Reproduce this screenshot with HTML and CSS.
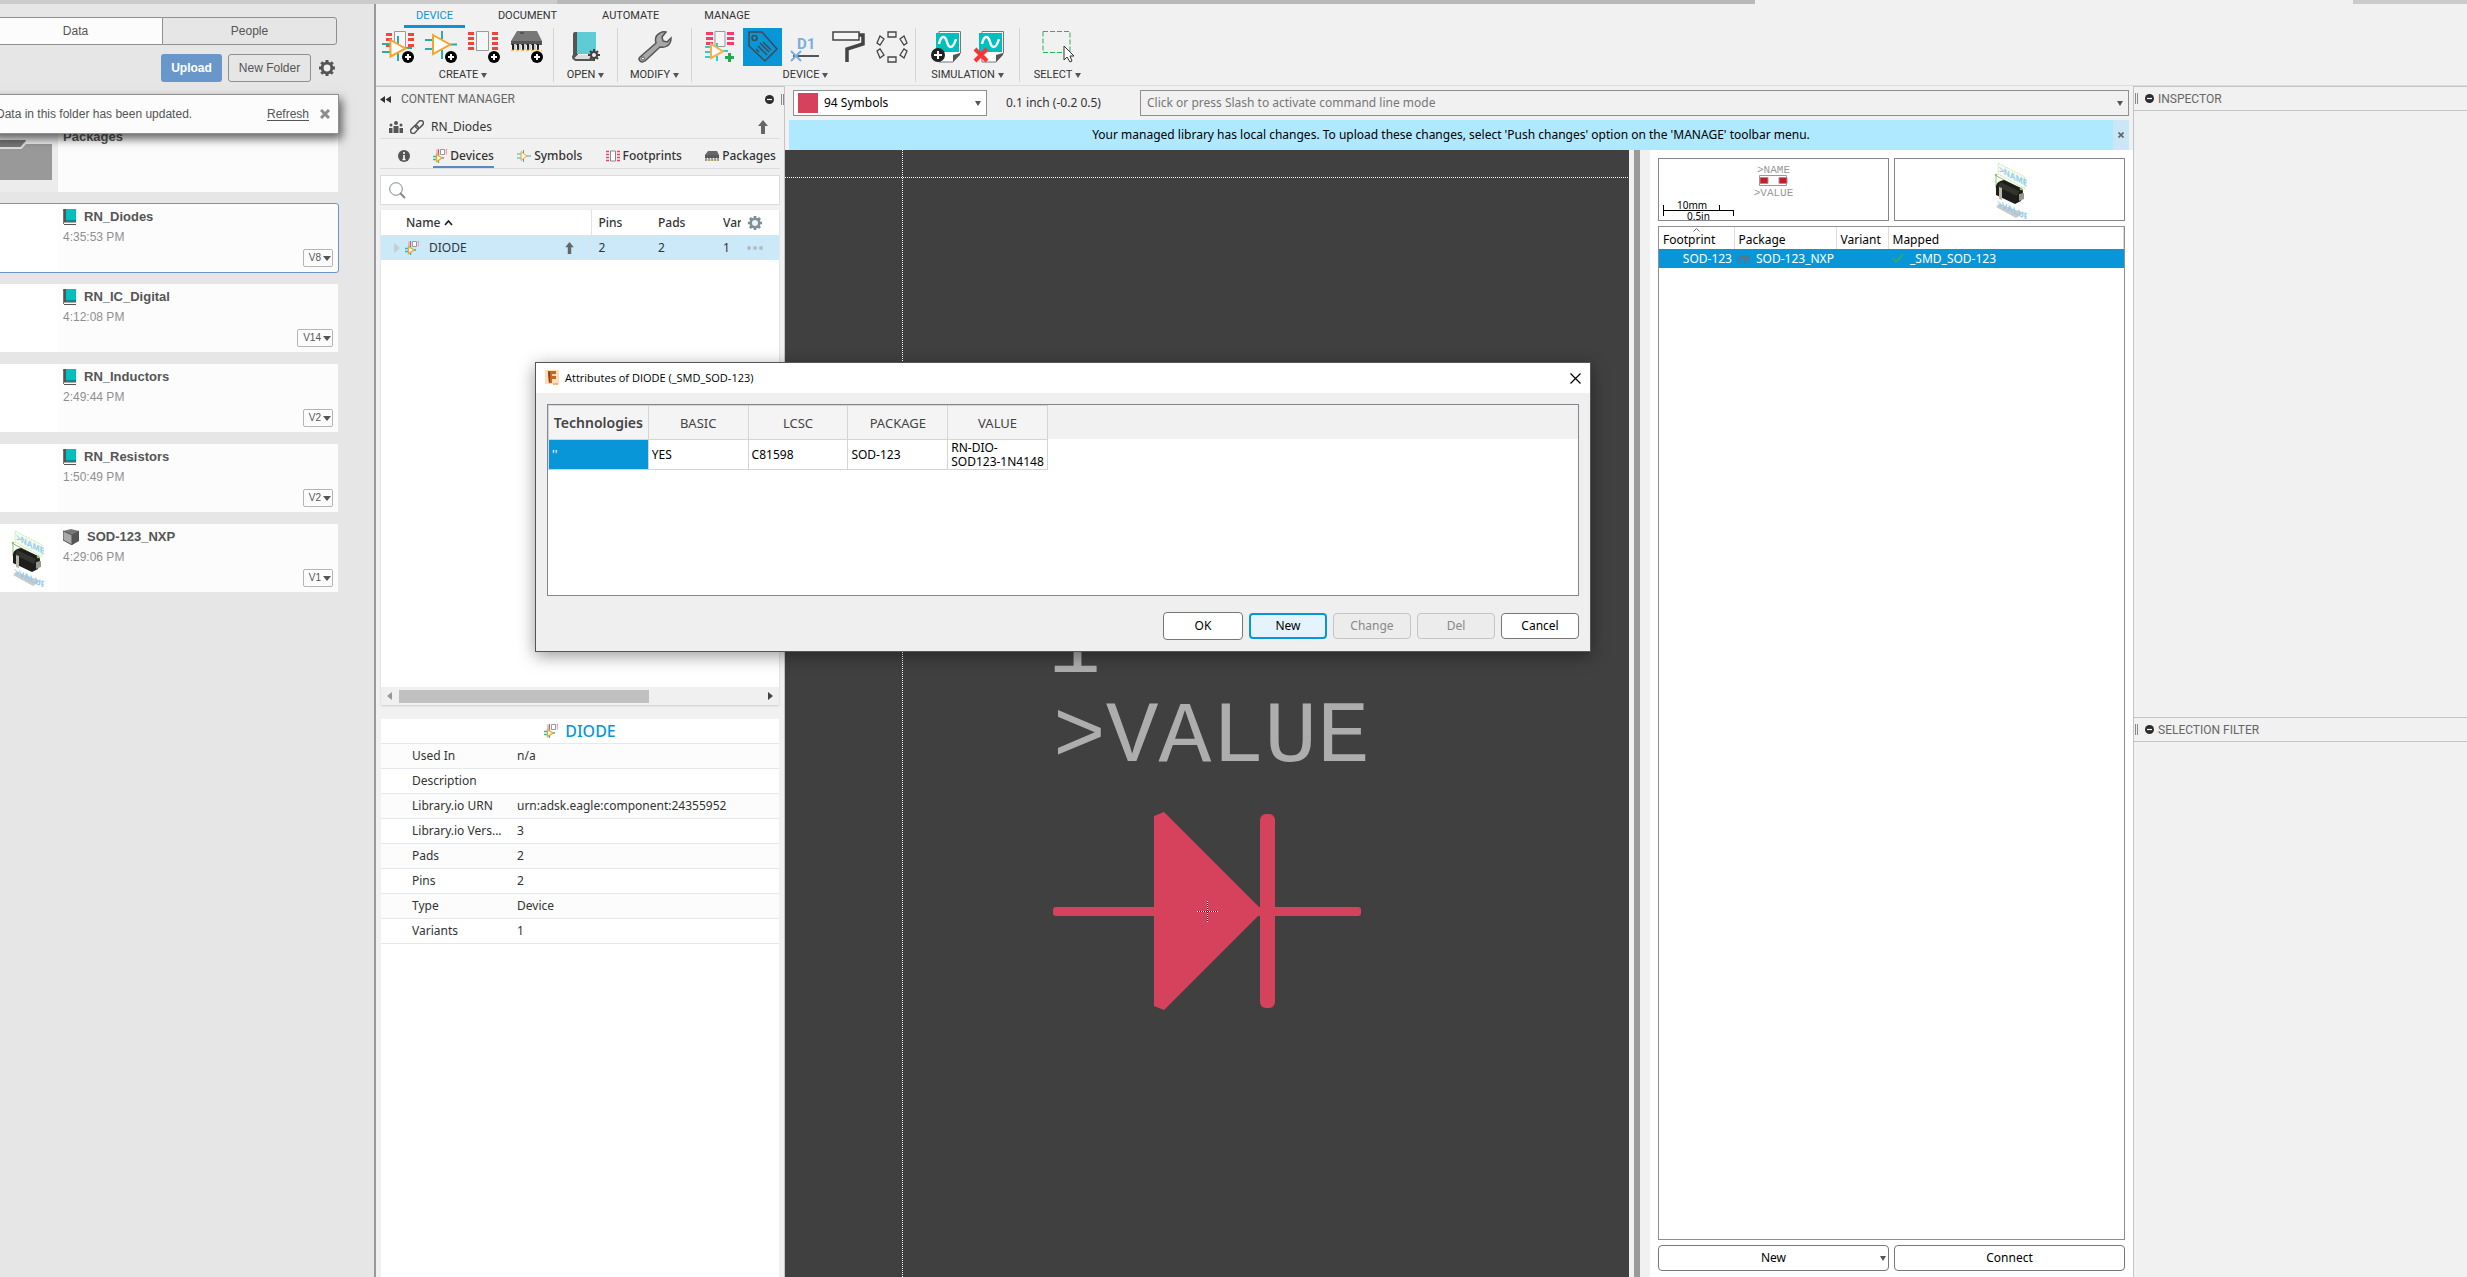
FILE: index.html
```html
<!DOCTYPE html>
<html lang="en">
<head>
    <meta charset="UTF-8">
    <meta name="viewport" content="width=device-width, initial-scale=1.0">
    <title>RN_Diodes</title>
    <link rel="stylesheet" href="styles.css">
</head>
<body>

    <!-- shared icons -->
    <svg class="sprite" aria-hidden="true">
        <symbol id="i-book" viewBox="0 0 13 16">
            <path d="M0 1q0-1 1-1h2v13H1q-1 0-1 1z" fill="#555"/>
            <path d="M0 13h13M1 15.500h12" stroke="#555" stroke-width="1"/>
            <path d="M3 0h10v11H3z" fill="#00bfbf"/>
            <path d="M3 11h10v2H3z" fill="#12898c"/>
            <path d="M0 2v13" stroke="#777" stroke-width="2"/>
        </symbol>
        <symbol id="i-gear" viewBox="0 0 18 18">
            <path d="M9 1v16M1 9h16M3.300 3.300l11.400 11.400M14.700 3.300L3.300 14.700" stroke="currentColor" stroke-width="3"/>
            <circle cx="9" cy="9" r="4.800" fill="none" stroke="currentColor" stroke-width="3"/>
            <circle cx="9" cy="9" r="3.400" class="gear-hole"/>
        </symbol>
        <symbol id="i-minus" viewBox="0 0 9 9">
            <circle cx="4.500" cy="4.500" r="4.500" fill="#2d2d2d"/>
            <path d="M2 4.500h5" stroke="#fff" stroke-width="1.200"/>
        </symbol>
        <symbol id="i-up" viewBox="0 0 10 14">
            <path d="M5 0l5 6H7v8H3V6H0z" fill="#666"/>
        </symbol>
        <symbol id="i-device" viewBox="0 0 14 14">
            <path d="M5 1h1M5 3h1M13 1h1M13 3h1" stroke="#f0486e" stroke-width="2"/>
            <path d="M4 .500v5M13.500.500v5" stroke="#f5a3b7" stroke-width="1.500"/>
            <path d="M7.500.500h4v5h-4z" fill="#fff" stroke="#999"/>
            <path d="M0 7.500h4M0 10.500h4M8 9h3M5.500 4v3M5.500 11v3" stroke="#2cb7b7" stroke-width="1.300"/>
            <path d="M3.500 5.500l5.500 3.500-5.500 3.500z" fill="#fff" stroke="#f7a428" stroke-width="1.300"/>
        </symbol>
        <symbol id="i-symbol" viewBox="0 0 14 12">
            <path d="M0 4h4M0 8h4M9 6h5M6.500 0v3M6.500 9v3" stroke="#2cb7b7"/>
            <path d="M4 1.500l6 4.500-6 4.500z" fill="none" stroke="#f7a428"/>
        </symbol>
        <symbol id="i-footprint" viewBox="0 0 14 12">
            <path d="M0 1.500h3M0 4.500h3M0 7.500h3M0 10.500h3M11 1.500h3M11 4.500h3M11 7.500h3M11 10.500h3" stroke="#f0406a" stroke-width="1.500"/>
            <path d="M4.500 1h5v10h-5z" fill="#fff" stroke="#888"/>
        </symbol>
        <symbol id="i-package" viewBox="0 0 14 10">
            <path d="M3 0h9l2 4v3H0V4z" fill="#666"/>
            <path d="M1 4v6M4 4v6M7 4v6M10 4v6M13 4v6" stroke="#444"/>
            <path d="M2 9h12" stroke="#e3b23b" stroke-dasharray="2 1"/>
        </symbol>
        <symbol id="i-plus" viewBox="0 0 12 12">
            <circle cx="6" cy="6" r="6" fill="#000"/>
            <path d="M6 3v6M3 6h6" stroke="#fff" stroke-width="2"/>
        </symbol>
        <symbol id="i-chip3d" viewBox="0 0 34 58">
            <path d="M5 2l27 14v12L5 13z" fill="#f4fbf0" stroke="#bfe0ae" stroke-width=".800" stroke-dasharray="2 1"/>
            <text x="0" y="0" transform="matrix(.92 .48 0 1 6 11)" font-family="Liberation Sans" font-weight="bold" font-size="9" fill="#8fcdec">&gt;NAME</text>
            <path d="M3 46l4-3 24 9-8 5z" fill="#c9c9c9"/>
            <path d="M3 14v13M2 14l26 14" stroke="#8fc368"/>
            <path d="M3 25q1-5 8-6l17 8q2 1 2 4l-2 9-6 3-19-9z" fill="#1d1d1b"/>
            <path d="M5 26l2-5 19 9-2 5z" fill="#34342f"/>
            <path d="M6 26l3 1v12l-3-1z" fill="#bab7aa"/>
            <path d="M26 33l5-1v6l-5 2z" fill="#99968a"/>
            <text x="0" y="0" transform="matrix(.92 .42 0 1 4 45)" font-family="Liberation Sans" font-weight="bold" font-size="9" fill="#8fcdec">&gt;VALUE</text>
            <circle cx="3" cy="14" r="1.300" fill="#8fc368"/>
            <circle cx="28" cy="28" r="1.300" fill="#8fc368"/>
        </symbol>
        <symbol id="i-wave" viewBox="0 0 28 32">
            <path d="M6 .500h21.500V22L20 31H6z" fill="#fff" stroke="#777"/>
            <path d="M3 2h23v19H3z" fill="#00bfbf"/>
            <path d="M6 13c2-9 6-9 8-2s6 7 9-3" fill="none" stroke="#fff" stroke-width="2.500"/>
            <path d="M27 22v2l-7 7v-7z" fill="#555"/>
        </symbol>
    </svg>

    <div class="strip"><span class="strip-left"></span><span class="strip-tab"></span><span class="strip-gap"></span><span class="strip-right"></span></div>

    <div class="app">
        <aside class="data-panel">
            <div class="segments">
                <button class="segment active">Data</button>
                <button class="segment">People</button>
            </div>
            <div class="data-actions">
                <button class="upload">Upload</button>
                <button class="new-folder">New Folder</button>
                <button class="icon-button gear" aria-label="Settings"><svg width="18" height="18"><use href="#i-gear"/></svg></button>
            </div>

            <div class="file-list">
                <div class="notice">
                    <span>Data in this folder has been updated.</span>
                    <a href="#">Refresh</a>
                    <button class="icon-button" aria-label="Close"><svg width="10" height="10" viewBox="0 0 10 10"><path d="M1 1l8 8M9 1L1 9" stroke="#8c8c8c" stroke-width="3"/></svg></button>
                </div>
                <div class="card folder">
                    <div class="thumb"><svg width="52" height="44" viewBox="0 0 52 44"><path d="M0 4h26l-4 8H0z" fill="#777"/><path d="M0 12h22l4-4h26v36H0z" fill="#999"/><path d="M0 12h21l4-5" fill="none" stroke="#ddd" stroke-width="2"/></svg></div>
                    <div class="card-body"><h3>Packages</h3></div>
                </div>
                <div class="card selected">
                    <div class="thumb"></div>
                    <div class="card-body">
                        <h3><svg width="13" height="16"><use href="#i-book"/></svg>RN_Diodes</h3>
                        <p>4:35:53 PM</p>
                        <button class="version">V8<i class="caret"></i></button>
                    </div>
                </div>
                <div class="card">
                    <div class="thumb"></div>
                    <div class="card-body">
                        <h3><svg width="13" height="16"><use href="#i-book"/></svg>RN_IC_Digital</h3>
                        <p>4:12:08 PM</p>
                        <button class="version">V14<i class="caret"></i></button>
                    </div>
                </div>
                <div class="card">
                    <div class="thumb"></div>
                    <div class="card-body">
                        <h3><svg width="13" height="16"><use href="#i-book"/></svg>RN_Inductors</h3>
                        <p>2:49:44 PM</p>
                        <button class="version">V2<i class="caret"></i></button>
                    </div>
                </div>
                <div class="card">
                    <div class="thumb"></div>
                    <div class="card-body">
                        <h3><svg width="13" height="16"><use href="#i-book"/></svg>RN_Resistors</h3>
                        <p>1:50:49 PM</p>
                        <button class="version">V2<i class="caret"></i></button>
                    </div>
                </div>
                <div class="card">
                    <div class="thumb"><svg width="34" height="58"><use href="#i-chip3d"/></svg></div>
                    <div class="card-body">
                        <h3><svg width="16" height="16" viewBox="0 0 16 16"><path d="M0 2l8-2 8 2-7 4z" fill="#777"/><path d="M0 2l9 4v10l-9-5z" fill="#a9a9a9"/><path d="M16 2L9 6v10l7-4z" fill="#555"/><path d="M0 2l9 4 7-4M9 6v10l-9-5V2" fill="none" stroke="#555"/></svg>SOD-123_NXP</h3>
                        <p>4:29:06 PM</p>
                        <button class="version">V1<i class="caret"></i></button>
                    </div>
                </div>
            </div>
        </aside>

        <div class="main">
            <header class="ribbon">
                <nav class="ribbon-tabs">
                    <a href="#" class="active">DEVICE</a>
                    <a href="#">DOCUMENT</a>
                    <a href="#">AUTOMATE</a>
                    <a href="#">MANAGE</a>
                </nav>
                <div class="tools">
                    <div class="tool-group create">
                        <div class="tool-row">
                            <button class="tool" aria-label="New device"><svg width="34" height="34" viewBox="0 0 34 34"><path d="M4 4.500h6M4 9.500h6M4 15.500h6M26 4.500h6M26 9.500h6M26 15.500h6" stroke="#f0453c" stroke-width="3"/><path d="M12.500 1.500h11v17h-11z" fill="#f6f6f6" stroke="#999"/><path d="M0 14h8M0 22h8M22 18h8M16 6v8M16 23v8" stroke="#2aacac" stroke-width="2"/><path d="M8.500 10l15 8.500-15 8z" fill="#fff" stroke="#f7a428" stroke-width="2"/><use href="#i-plus" x="20" y="21" width="12" height="12"/></svg></button>
                            <button class="tool" aria-label="New symbol"><svg width="34" height="34" viewBox="0 0 34 34"><path d="M0 10h8M0 19h8M24 14.500h8M17 1v8M17 20v9" stroke="#2aacac" stroke-width="2"/><path d="M8 5l17 9.500L8 24z" fill="#fff" stroke="#f7a428" stroke-width="2"/><use href="#i-plus" x="20" y="21" width="12" height="12"/></svg></button>
                            <button class="tool" aria-label="New footprint"><svg width="34" height="34" viewBox="0 0 34 34"><path d="M0 3.500h6M0 8.500h6M0 13.500h6M0 18.500h6M24 3.500h6M24 8.500h6M24 13.500h6M24 18.500h6" stroke="#f0453c" stroke-width="3"/><path d="M8.500 1.500h12v19h-12z" fill="#f6f6f6" stroke="#999"/><use href="#i-plus" x="20" y="21" width="12" height="12"/></svg></button>
                            <button class="tool" aria-label="New package"><svg width="34" height="34" viewBox="0 0 34 34"><path d="M6 1h20l5 10v4H0v-4z" fill="#777"/><path d="M0 11h31v4H0z" fill="#555"/><path d="M2 14v6M7 14v6M12 14v6M17 14v6M22 14v6M27 14v6" stroke="#222" stroke-width="2"/><path d="M4 14v6M9 14v6M14 14v6M19 14v6M24 14v6" stroke="#ccc" stroke-width="2"/><path d="M0 20.500h31" stroke="#f5c55a" stroke-width="1.500" stroke-dasharray="3 2"/><path d="M9 3h4" stroke="#333"/><use href="#i-plus" x="20" y="21" width="12" height="12"/></svg></button>
                        </div>
                        <button class="tool-label">CREATE<i class="caret"></i></button>
                    </div>
                    <div class="tool-group open">
                        <div class="tool-row">
                            <button class="tool" aria-label="Open library"><svg width="34" height="34" viewBox="0 0 34 34"><path d="M4 4q0-2 2-2h3v23l-5 4z" fill="#555"/><path d="M8 2h19v22H8z" fill="#5fcbd5"/><path d="M8 24q-4 1-4 3t3 3h18" fill="none" stroke="#555" stroke-width="2"/><path d="M8 25h17v4H7z" fill="#ddd"/><g stroke="#444" stroke-width="2"><path d="M25 19v12M19 25h12M21 21l8 8M29 21l-8 8"/><circle cx="25" cy="25" r="3" fill="#f1f1f1"/></g></svg></button>
                        </div>
                        <button class="tool-label">OPEN<i class="caret"></i></button>
                    </div>
                    <div class="tool-group modify">
                        <div class="tool-row">
                            <button class="tool" aria-label="Modify"><svg width="34" height="34" viewBox="0 0 34 34"><path d="M2 27L18 13q-2-7 4-10 3-2 6-1l-4 5 1 4 4 1 4-4q0 6-4 8-3 2-7 1L7 31q-3 2-5 0t0-4z" fill="#a8a8a8" stroke="#555" stroke-width="1.500"/><circle cx="5" cy="28.500" r="1.500" fill="#fff" stroke="#555"/></svg></button>
                        </div>
                        <button class="tool-label">MODIFY<i class="caret"></i></button>
                    </div>
                    <div class="tool-group device">
                        <div class="tool-row">
                            <button class="tool" aria-label="Add variant"><svg width="34" height="34" viewBox="0 0 34 34"><path d="M3 3.500h7M3 8.500h7M3 13.500h7M24 3.500h7M24 8.500h7M24 13.500h7" stroke="#f73c6c" stroke-width="3"/><path d="M12 1.500h10v15H12z" fill="#f6f6f6" stroke="#999"/><path d="M2 17h6M2 22h6M2 27h6M20 21h5M14 13v5M14 26v5" stroke="#3cc" stroke-width="2"/><path d="M8 14l12 7.500L8 28z" fill="#fff" stroke="#f7b04a" stroke-width="2"/><path d="M26.500 23v9M22 27.500h9" stroke="#24a84f" stroke-width="3"/></svg></button>
                            <button class="tool active" aria-label="Attributes"><svg width="34" height="34" viewBox="0 0 34 34"><path d="M3 2h13l15 17-12 12L3 16z" fill="none" stroke="#404a50" stroke-width="1.500"/><circle cx="8.500" cy="8" r="2.500" fill="none" stroke="#404a50" stroke-width="1.500"/><path d="M12 16l9 9M14 13l9 9M17 12l8 8M10 19l3 3" stroke="#404a50" stroke-width="1.500"/></svg></button>
                            <button class="tool" aria-label="Prefix"><svg width="34" height="34" viewBox="0 0 34 34"><text x="8" y="19" font-family="Roboto" font-weight="bold" font-size="15" fill="#7aaee0">D1</text><path d="M4 26h26" stroke="#555" stroke-width="2"/><path d="M2 21l10 10M12 21L2 31" stroke="#7aaee0" stroke-width="2"/></svg></button>
                            <button class="tool" aria-label="Paint"><svg width="34" height="34" viewBox="0 0 34 34"><path d="M1 2h26v8H1z" fill="#f6f6f6" stroke="#444" stroke-width="1.500"/><path d="M27 5h4v9l-16 5v13" fill="none" stroke="#444" stroke-width="3.500"/></svg></button>
                            <button class="tool" aria-label="Arrange"><svg width="34" height="34" viewBox="0 0 34 34" fill="none" stroke="#444" stroke-width="1.300"><path d="M13 2h8v5h-8zM13 27h8v5h-8zM5 6l4 3-4 6-3-2zM29 6l-4 3 4 6 3-2zM5 28l4-3-4-6-3 2zM29 28l-4-3 4-6 3 2z"/></svg></button>
                        </div>
                        <button class="tool-label">DEVICE<i class="caret"></i></button>
                    </div>
                    <div class="tool-group simulation">
                        <div class="tool-row">
                            <button class="tool" aria-label="Add model"><svg width="34" height="34" viewBox="0 0 34 34"><use href="#i-wave" x="4" y="1" width="28" height="32"/><circle cx="9" cy="25" r="7" fill="#222"/><path d="M9 21v8M5 25h8" stroke="#fff" stroke-width="2"/></svg></button>
                            <button class="tool" aria-label="Remove model"><svg width="34" height="34" viewBox="0 0 34 34"><use href="#i-wave" x="4" y="1" width="28" height="32"/><path d="M3 19l12 12M15 19L3 31" stroke="#f33" stroke-width="4"/></svg></button>
                        </div>
                        <button class="tool-label">SIMULATION<i class="caret"></i></button>
                    </div>
                    <div class="tool-group select">
                        <div class="tool-row">
                            <button class="tool" aria-label="Select"><svg width="34" height="34" viewBox="0 0 34 34"><path d="M2 1.500h27v21H2z" fill="none" stroke="#23b35a" stroke-dasharray="5 2"/><path d="M23 16v14l3-3 3 5 2-1-2-5h4z" fill="#fff" stroke="#333"/></svg></button>
                        </div>
                        <button class="tool-label">SELECT<i class="caret"></i></button>
                    </div>
                </div>
            </header>

            <div class="workspace">
                <section class="manager">
                    <div class="panel-title">
                        <svg width="11" height="7" viewBox="0 0 11 7"><path d="M5 0v7L0 3.500zM11 0v7L5.500 3.500z" fill="#333"/></svg>
                        <span>CONTENT MANAGER</span>
                        <svg class="push" width="9" height="9"><use href="#i-minus"/></svg>
                        <i class="grip"></i>
                    </div>
                    <div class="library">
                        <svg width="14" height="12" viewBox="0 0 14 12" fill="#555"><circle cx="2" cy="4" r="1.500"/><circle cx="7" cy="2" r="2"/><circle cx="12" cy="4" r="1.500"/><path d="M0 7h3.500v5H0zM4.500 5h5v7h-5zM10.500 7H14v5h-3.500z"/></svg>
                        <svg width="14" height="14" viewBox="0 0 14 14" fill="none" stroke="#555" stroke-width="1.500"><g transform="rotate(-45 7 7)"><rect x="-1" y="4.500" width="9" height="5" rx="2.500"/><rect x="6" y="4.500" width="9" height="5" rx="2.500"/></g></svg>
                        <span>RN_Diodes</span>
                        <svg class="push" width="10" height="14"><use href="#i-up"/></svg>
                    </div>
                    <nav class="manager-tabs">
                        <a href="#" aria-label="Info"><svg width="12" height="12" viewBox="0 0 12 12"><circle cx="6" cy="6" r="6" fill="#555"/><path d="M6 2v2M6 5v5M4.500 9.500h3" stroke="#fff" stroke-width="1.600"/></svg></a>
                        <a href="#" class="active"><svg width="14" height="14"><use href="#i-device"/></svg>Devices</a>
                        <a href="#"><svg width="14" height="12"><use href="#i-symbol"/></svg>Symbols</a>
                        <a href="#"><svg width="14" height="12"><use href="#i-footprint"/></svg>Footprints</a>
                        <a href="#"><svg width="14" height="10"><use href="#i-package"/></svg>Packages</a>
                    </nav>
                    <label class="search">
                        <svg width="17" height="17" viewBox="0 0 17 17" fill="none" stroke="#7d8a91"><circle cx="7" cy="7" r="6.300"/><path d="M11 11l5 5" stroke-width="2"/></svg>
                        <input type="text" aria-label="Search devices">
                    </label>
                    <div class="device-list">
                        <table class="devices">
                            <thead>
                                <tr>
                                    <th class="name">Name<svg width="9" height="6" viewBox="0 0 9 6"><path d="M1 5l3.500-4L8 5" fill="none" stroke="#222" stroke-width="1.700"/></svg></th>
                                    <th class="pins">Pins</th>
                                    <th class="pads">Pads</th>
                                    <th class="variants"><span>Var</span></th>
                                    <th class="config"><svg width="16" height="16"><use href="#i-gear"/></svg></th>
                                </tr>
                            </thead>
                            <tbody>
                                <tr>
                                    <td class="name"><div><svg width="6" height="10" viewBox="0 0 6 10"><path d="M0 0l6 5-6 5z" fill="#c8cdd0"/></svg><svg width="14" height="14"><use href="#i-device"/></svg><span>DIODE</span><svg class="push" width="9" height="12"><use href="#i-up"/></svg></div></td>
                                    <td>2</td>
                                    <td>2</td>
                                    <td>1</td>
                                    <td class="config"><svg width="16" height="4" viewBox="0 0 16 4" fill="#b5bbc0"><circle cx="2" cy="2" r="2"/><circle cx="8" cy="2" r="2"/><circle cx="14" cy="2" r="2"/></svg></td>
                                </tr>
                            </tbody>
                        </table>
                        <div class="scrollbar">
                            <svg width="5" height="8" viewBox="0 0 5 8"><path d="M5 0v8L0 4z" fill="#999"/></svg>
                            <div class="track"><span></span></div>
                            <svg width="5" height="8" viewBox="0 0 5 8"><path d="M0 0v8l5-4z" fill="#444"/></svg>
                        </div>
                    </div>
                    <div class="details">
                        <h2><svg width="14" height="14"><use href="#i-device"/></svg>DIODE</h2>
                        <table>
                            <tr><th>Used In</th><td>n/a</td></tr>
                            <tr><th>Description</th><td></td></tr>
                            <tr><th>Library.io URN</th><td>urn:adsk.eagle:component:24355952</td></tr>
                            <tr><th>Library.io Vers...</th><td>3</td></tr>
                            <tr><th>Pads</th><td>2</td></tr>
                            <tr><th>Pins</th><td>2</td></tr>
                            <tr><th>Type</th><td>Device</td></tr>
                            <tr><th>Variants</th><td>1</td></tr>
                        </table>
                    </div>
                </section>

                <section class="editor">
                    <div class="command-bar">
                        <label class="layer">
                            <span class="swatch"></span>
                            <select aria-label="Layer"><option>94 Symbols</option></select>
                            <i class="caret"></i>
                        </label>
                        <span class="coords">0.1 inch (-0.2 0.5)</span>
                        <label class="command">
                            <input type="text" aria-label="Command line" placeholder="Click or press Slash to activate command line mode">
                            <i class="caret"></i>
                        </label>
                    </div>
                    <div class="banner">
                        <span>Your managed library has local changes. To upload these changes, select 'Push changes' option on the 'MANAGE' toolbar menu.</span>
                        <button aria-label="Dismiss"><svg width="6" height="6" viewBox="0 0 6 6"><path d="M.500.500l5 5M5.500.500l-5 5" stroke="#666" stroke-width="1.700"/></svg></button>
                    </div>
                    <div class="split">
                        <div class="canvas">
                            <svg width="100%" height="100%">
                                <path d="M0 27.500h3000M117.500 0v3000" stroke="#fff" stroke-dasharray="1 1"/>
                                <g class="net-text">
                                    <text x="263" y="522">1</text>
                                    <text x="268" y="611">&gt;VALUE</text>
                                </g>
                                <g fill="#d6415b">
                                    <rect x="268" y="757" width="308" height="9" rx="3"/>
                                    <path d="M369 666l10-4 97 97v4l-97 97-10-4z"/>
                                    <rect x="475" y="664" width="15" height="194" rx="6"/>
                                </g>
                                <path d="M412 761.500h21M422.500 751v21" stroke="#511"/>
                                <path d="M412 761.500h21M422.500 751v21" stroke="#fff" stroke-dasharray="1 1"/>
                            </svg>
                        </div>
                        <div class="splitter"><span></span></div>
                        <div class="variant-panel">
                            <div class="previews">
                                <div class="preview">
                                    <svg width="100%" height="100%">
                                        <svg x="50%" y="0" overflow="visible">
                                            <g font-family="Liberation Mono" font-size="11" fill="#999" text-anchor="middle"><text x="0" y="14">&gt;NAME</text><text x="0" y="37">&gt;VALUE</text></g>
                                            <path d="M-14 16.500h27v10h-27z" fill="none" stroke="#999"/>
                                            <path d="M-13.500 18.500h8v6h-8zM5.500 18.500h8v6h-8z" fill="#c4202a" stroke="#999"/>
                                        </svg>
                                        <path d="M4.500 46v11M4 51.500h71M60.500 46v5M74.500 51v6" stroke="#000" fill="none"/>
                                        <text class="scale" x="18" y="50">10mm</text>
                                        <text class="scale" x="28" y="61">0.5in</text>
                                    </svg>
                                </div>
                                <div class="preview model"><svg width="34" height="58"><use href="#i-chip3d"/></svg></div>
                            </div>
                            <div class="variant-list">
                                <table>
                                    <thead><tr><th class="fp"><svg class="sort" width="7" height="4" viewBox="0 0 7 4"><path d="M.500 3.500l3-3 3 3" fill="none" stroke="#666"/></svg>Footprint</th><th class="pk">Package</th><th class="vr">Variant</th><th>Mapped</th></tr></thead>
                                    <tbody><tr>
                                        <td class="right">SOD-123</td>
                                        <td><svg width="12" height="9" viewBox="0 0 12 9"><path d="M3 1h7l2 3v4h-2V5H8v4H6V5H2v4H0V5z" fill="#4a7a98"/></svg>SOD-123_NXP</td>
                                        <td></td>
                                        <td class="mapped"><svg width="12" height="10" viewBox="0 0 12 10"><path d="M1 5l3 4 7-8" fill="none" stroke="#2aa876" stroke-width="2"/></svg>_SMD_SOD-123</td>
                                    </tr></tbody>
                                </table>
                            </div>
                            <div class="variant-actions">
                                <button class="btn">New<i class="caret"></i></button>
                                <button class="btn">Connect</button>
                            </div>
                        </div>
                    </div>
                </section>

                <aside class="inspector">
                    <section class="inspector-main">
                        <div class="panel-title"><i class="grip"></i><svg width="9" height="9"><use href="#i-minus"/></svg><span>INSPECTOR</span></div>
                    </section>
                    <section class="selection-filter">
                        <div class="panel-title"><i class="grip"></i><svg width="9" height="9"><use href="#i-minus"/></svg><span>SELECTION FILTER</span></div>
                    </section>
                </aside>
            </div>
        </div>
    </div>

    <dialog open class="attributes" aria-labelledby="attributes-title">
        <div class="dialog-title">
            <svg width="14" height="16" viewBox="0 0 14 16"><path d="M0 0h14v14H0z" fill="#fbdcbc"/><path d="M3 1h8v3H7v2h4v3H7v4H4z" fill="#c8661c"/><path d="M3 1l2 1v10l-1 1z" fill="#8e3f0c"/><path d="M8 13h5v2H8z" fill="#f7b27a"/></svg>
            <span id="attributes-title">Attributes of DIODE (_SMD_SOD-123)</span>
            <button class="icon-button push" aria-label="Close"><svg width="11" height="11" viewBox="0 0 11 11"><path d="M.500.500l10 10M10.500.500l-10 10" stroke="#000" stroke-width="1.200"/></svg></button>
        </div>
        <div class="dialog-body">
            <div class="attribute-list">
                <table>
                    <thead><tr><th class="bold">Technologies</th><th>BASIC</th><th>LCSC</th><th>PACKAGE</th><th>VALUE</th></tr></thead>
                    <tbody><tr><td class="current">''</td><td>YES</td><td>C81598</td><td>SOD-123</td><td>RN-DIO-<br>SOD123-1N4148</td></tr></tbody>
                </table>
            </div>
            <div class="dialog-actions">
                <button class="btn">OK</button>
                <button class="btn primary">New</button>
                <button class="btn" disabled>Change</button>
                <button class="btn" disabled>Del</button>
                <button class="btn">Cancel</button>
            </div>
        </div>
    </dialog>

</body>
</html>
```
FILE: styles.css
```css
* {
    box-sizing: border-box;
}

body {
    margin: 0;
    height: 100vh;
    display: flex;
    flex-direction: column;
    overflow: hidden;
    background: #f1f1f1;
    color: #333;
    font-family: "Noto Sans", sans-serif;
    font-size: 12px;
    line-height: 16px;
}

button, input, select {
    font: inherit;
    color: inherit;
    padding: 0;
    border: none;
    background: none;
}

a {
    color: inherit;
    text-decoration: none;
}

h2, h3, p {
    margin: 0;
}

svg {
    display: block;
    flex: none;
}

table {
    border-collapse: collapse;
    table-layout: fixed;
    width: 100%;
}

th, td {
    padding: 0;
    text-align: left;
    font-weight: normal;
}

.sprite {
    position: absolute;
    width: 0;
    height: 0;
}

.push {
    margin-left: auto;
}

.caret {
    flex: none;
    width: 0;
    height: 0;
    border: 3px solid transparent;
    border-top: 5px solid #555;
    border-bottom: none;
}

.icon-button {
    display: flex;
}

.grip {
    width: 3px;
    height: 11px;
    border-left: 1px solid #888;
    border-right: 1px solid #888;
}

.gear-hole {
    fill: #f1f1f1;
}

.strip {
    display: flex;
    height: 4px;
}

.strip-left {
    width: 557px;
    background: #cbcbcb;
}

.strip-tab {
    width: 1198px;
    background: #b9b9b9;
}

.strip-gap {
    flex: 1;
}

.strip-right {
    width: 114px;
    background: #cbcbcb;
}

.app {
    flex: 1;
    display: flex;
    min-height: 0;
}

/* data panel */
.data-panel {
    width: 376px;
    padding-top: 13px;
    background: #e6e6e6;
    border-right: 2px solid #999;
    overflow: hidden;
    font-family: "Liberation Sans", Arial, sans-serif;
    color: #555;
}

.segments {
    display: flex;
    margin: 0 37px 0 -12px;
}

.segment {
    flex: 1;
    height: 28px;
    border: 1px solid #8f8f8f;
    border-radius: 0 3px 3px 0;
}

.segment.active {
    background: #fcfcfc;
    border-right: none;
    border-radius: 0;
}

.data-actions {
    display: flex;
    justify-content: flex-end;
    align-items: center;
    gap: 6px;
    margin: 9px 38px 0 0;
}

.upload, .new-folder {
    height: 28px;
    border-radius: 3px;
    width: 61px;
    background: #6a97ca;
    color: #fff;
    font-weight: bold;
}

.new-folder {
    width: 83px;
    background: none;
    border: 1px solid #8f8f8f;
    color: #555;
    font-weight: normal;
}

.gear {
    margin-left: 1px;
    color: #555;
}

.file-list {
    position: relative;
    display: flex;
    flex-direction: column;
    gap: 12px;
    margin: 12px 36px 0 0;
    padding-top: 30px;
}

.notice {
    position: absolute;
    top: 0;
    left: -10px;
    right: -1px;
    height: 40px;
    display: flex;
    align-items: center;
    gap: 11px;
    padding: 0 8px 0 5px;
    background: #fcfcfc;
    border: 1px solid #8f8f8f;
    box-shadow: 3px 5px 9px rgba(0, 0, 0, 0.6);
}

.notice a {
    margin-left: auto;
    text-decoration: underline;
    text-underline-offset: 2px;
}

.card {
    display: flex;
    height: 68px;
    background: #fff;
    border-radius: 0 2px 2px 0;
}

.card.selected {
    outline: 1px solid #6a97ca;
}

.thumb {
    width: 58px;
    padding-right: 4px;
    display: flex;
    align-items: center;
    justify-content: center;
}

.folder .thumb {
    background: #ececec;
    justify-content: flex-start;
}

.card-body {
    flex: 1;
    display: flex;
    flex-direction: column;
    padding: 5px;
    background: #fcfcfc;
}

.card-body h3 {
    display: flex;
    align-items: center;
    gap: 8px;
    font-size: 13px;
}

.card-body p {
    margin-top: 4px;
    color: #8f8f8f;
}

.version {
    align-self: flex-end;
    margin-top: auto;
    height: 18px;
    display: flex;
    align-items: center;
    gap: 2px;
    padding: 0 1px 0 5px;
    border: 1px solid #b5b5b5;
    border-radius: 2px;
    font-size: 10px;
}

.version .caret {
    border-width: 5px 4px 0;
}

/* ribbon */
.main {
    flex: 1;
    display: flex;
    flex-direction: column;
    min-width: 0;
}

.ribbon {
    height: 82px;
    border-bottom: 1px solid #dcdcdc;
    font-family: Roboto, sans-serif;
    font-size: 11px;
}

.ribbon-tabs {
    display: flex;
    gap: 21px;
    padding-left: 28px;
}

.ribbon-tabs a {
    height: 24px;
    padding: 4px 12px 0;
    border-bottom: 3px solid transparent;
}

.ribbon-tabs a.active {
    color: #0996d9;
    border-color: #0996d9;
}

.tools {
    display: flex;
    height: 54px;
}

.tool-group {
    display: flex;
    flex-direction: column;
    align-items: center;
    padding: 0 4px;
    border-right: 1px solid #d5d5d5;
}

.create {
    padding: 0 4px 0 1px;
}

.open {
    width: 64px;
}

.modify {
    width: 74px;
}

.device {
    padding: 0 2px 0 6px;
}

.simulation {
    width: 104px;
}

.select {
    width: 75px;
    border: none;
}

.tool-row {
    display: flex;
}

.tool {
    width: 43px;
    height: 38px;
    display: flex;
    align-items: center;
    justify-content: center;
}

.tool.active {
    width: 39px;
    margin: 0 2px;
    background: #0996d9;
}

.tool-label {
    display: flex;
    align-items: center;
    gap: 3px;
    height: 18px;
    margin-top: 1px;
}

.workspace {
    flex: 1;
    display: flex;
    min-height: 0;
}

/* content manager */
.manager {
    width: 409px;
    display: flex;
    flex-direction: column;
    padding: 0 4px;
    border-top: 1px solid #c4c4c4;
    border-right: 1px solid #c4c4c4;
}

.panel-title {
    display: flex;
    align-items: center;
    gap: 10px;
    height: 24px;
    font-family: Roboto, sans-serif;
    font-size: 12px;
    color: #666;
}

.manager .panel-title .grip {
    margin: 0 -4px 0 -3px;
}

.library {
    display: flex;
    align-items: center;
    gap: 7px;
    height: 28px;
    padding: 4px 12px 0 9px;
    border-bottom: 1px solid #ddd;
}

.manager-tabs {
    display: flex;
    justify-content: space-between;
    padding: 0 4px 0 18px;
    border-bottom: 1px solid #ddd;
    font-weight: 500;
}

.manager-tabs a {
    display: flex;
    align-items: center;
    gap: 3px;
    height: 29px;
    padding-top: 6px;
    border-bottom: 2px solid transparent;
}

.manager-tabs a.active {
    border-color: #5b87c5;
}

.search {
    display: flex;
    align-items: center;
    gap: 8px;
    height: 30px;
    margin-top: 6px;
    padding: 0 8px;
    background: #fff;
    border: 1px solid #ddd;
}

.search input {
    flex: 1;
    outline: none;
}

.device-list {
    display: flex;
    flex-direction: column;
    height: 495px;
    margin: 5px 1px 0;
    background: #fff;
    box-shadow: 0 1px 2px rgba(0, 0, 0, 0.15);
}

.devices th {
    height: 25px;
    font-weight: 500;
}

.devices td {
    height: 25px;
    background: #cbe9f9;
}

.devices th.name {
    width: 210px;
    padding-left: 25px;
}

.devices th svg {
    display: inline-block;
    vertical-align: middle;
    margin-left: 4px;
}

.devices td + td, .devices th + th {
    padding-left: 7px;
}

.devices .name {
    border-right: 1px solid #dde3e6;
}

.pins {
    width: 60px;
}

.pads {
    width: 65px;
}

.variants span {
    display: block;
    width: 18px;
    overflow: hidden;
}

.config {
    width: 39px;
    color: #7c8f9a;
}

.devices td.name div {
    display: flex;
    align-items: center;
    gap: 5px;
    padding: 0 17px 0 13px;
}

.devices td.name span {
    margin-left: 5px;
}

.devices .config svg {
    margin-left: 0;
}

.scrollbar {
    display: flex;
    align-items: center;
    gap: 7px;
    height: 18px;
    margin-top: auto;
    padding: 0 6px;
    background: #f0f0f0;
}

.track {
    flex: 1;
}

.track span {
    display: block;
    width: 69%;
    height: 13px;
    background: #c0c0c0;
}

.details {
    flex: 1;
    margin: 14px 1px 0;
    background: #fff;
}

.details h2 {
    display: flex;
    align-items: center;
    justify-content: center;
    gap: 7px;
    height: 24px;
    font-size: 16px;
    font-weight: 500;
    color: #0996d9;
}

.details tr {
    border-top: 1px solid #e6e9ec;
    border-bottom: 1px solid #e6e9ec;
}

.details tr:nth-child(odd) {
    background: #fcfcfc;
}

.details th {
    width: 136px;
    height: 25px;
    padding-left: 31px;
}

/* editor */
.editor {
    flex: 1;
    display: flex;
    flex-direction: column;
    min-width: 0;
}

.command-bar {
    display: flex;
    align-items: center;
    padding: 4px 4px 4px 8px;
}

.layer, .command {
    display: flex;
    align-items: center;
    height: 26px;
    padding: 0 5px 0 4px;
    border: 1px solid #8f8f8f;
}

.layer {
    width: 194px;
    gap: 6px;
    background: #fff;
    color: #000;
}

.swatch {
    width: 20px;
    height: 20px;
    background: #d6415b;
}

.layer select, .command input {
    flex: 1;
    appearance: none;
    outline: none;
}

.coords {
    width: 153px;
    padding-left: 19px;
}

.command {
    flex: 1;
    padding-left: 6px;
}

.command input::placeholder {
    color: #777;
    opacity: 1;
}

.banner {
    display: flex;
    height: 30px;
    margin: 0 4px;
    background: #aee9ff;
    color: #000;
}

.banner span {
    flex: 1;
    align-self: center;
    text-align: center;
}

.banner button {
    width: 16px;
    display: flex;
    align-items: center;
    justify-content: center;
    background: #c9e7f6;
}

.split {
    flex: 1;
    display: flex;
    min-height: 0;
}

.canvas {
    flex: 1;
    background: #404040;
    overflow: hidden;
}

.net-text {
    font-family: "Liberation Mono", monospace;
    font-size: 88px;
    fill: #adadad;
}

.splitter {
    width: 21px;
    padding: 0 10px 0 5px;
    display: flex;
}

.splitter span {
    flex: 1;
    background: #999;
}

.variant-panel {
    width: 483px;
    display: flex;
    flex-direction: column;
    gap: 5px;
    padding: 8px 8px 6px;
    background: #fff;
    color: #000;
}

.previews, .variant-actions {
    display: flex;
    gap: 5px;
}

.preview {
    flex: 1;
    height: 63px;
    border: 1px solid #83868f;
}

.preview.model {
    display: flex;
    align-items: center;
    justify-content: center;
}

.scale {
    font-size: 10px;
}

.variant-list {
    flex: 1;
    border: 1px solid #8f8f8f;
}

.variant-list th {
    position: relative;
    height: 22px;
    padding: 3px 0 0 4px;
    border-right: 1px solid #ddd;
}

.sort {
    position: absolute;
    top: 1px;
    left: 34px;
}

.variant-list td {
    height: 19px;
    padding-left: 4px;
    background: #0996d9;
    color: #fff;
    white-space: nowrap;
}

.variant-list td.right {
    padding: 0 2px 0 0;
    text-align: right;
}

.variant-list td svg {
    display: inline-block;
    margin-right: 6px;
}

.fp {
    width: 75px;
}

.pk {
    width: 102px;
}

.vr {
    width: 52px;
}

.btn {
    display: flex;
    align-items: center;
    justify-content: center;
    height: 26px;
    background: #fff;
    border: 1px solid #777;
    border-radius: 4px;
    color: #000;
}

.variant-actions .btn {
    position: relative;
    flex: 1;
}

.variant-actions .caret {
    position: absolute;
    right: 2px;
}

/* inspector */
.inspector {
    width: 334px;
    display: flex;
    flex-direction: column;
    border-left: 1px solid #c4c4c4;
}

.inspector section {
    border-top: 1px solid #c4c4c4;
}

.inspector-main {
    flex: 53;
}

.selection-filter {
    flex: 47;
}

.inspector .panel-title {
    gap: 4px;
    padding-left: 1px;
    border-bottom: 1px solid #c4c4c4;
}

.inspector .grip {
    margin-right: 3px;
}

/* attributes dialog */
.attributes {
    position: absolute;
    left: 535px;
    top: 362px;
    width: 1056px;
    height: 290px;
    margin: 0;
    padding: 0;
    display: flex;
    flex-direction: column;
    background: #efefef;
    border: 1px solid #555;
    box-shadow: 0 4px 16px rgba(0, 0, 0, 0.4);
    color: #000;
}

.dialog-title {
    display: flex;
    align-items: center;
    gap: 6px;
    height: 30px;
    padding: 0 9px;
    background: #fff;
    font-family: "Open Sans", sans-serif;
    font-size: 11px;
}

.dialog-body {
    flex: 1;
    display: flex;
    flex-direction: column;
    gap: 16px;
    padding: 11px;
}

.attribute-list {
    flex: 1;
    border: 1px solid #83868f;
    background: linear-gradient(#f1f1f1 34px, #fff 34px);
}

.attribute-list table {
    width: 500px;
}

.attribute-list th {
    height: 34px;
    border: 1px solid #d5d5d5;
    background: #f4f4f4;
    text-align: center;
    font-size: 13px;
    color: #444;
}

.attribute-list th.bold {
    font-weight: 600;
    font-size: 14px;
}

.attribute-list td {
    height: 30px;
    padding: 0 3px;
    border: 1px solid #d5d5d5;
    background: #fff;
    font-size: 12px;
    line-height: 14px;
    white-space: nowrap;
}

.attribute-list td.current {
    background: #0996d9;
    color: #fff;
}

.dialog-actions {
    display: flex;
    justify-content: flex-end;
    align-items: center;
    gap: 6px;
}

.dialog-actions .btn {
    width: 78px;
}

.dialog-actions .btn:first-child {
    width: 80px;
    height: 28px;
}

.btn.primary {
    background: #e5f4fc;
    border: 2px solid #0996d9;
}

.btn:disabled {
    background: #ececec;
    border-color: #c4c4c4;
    color: #888;
}
```
